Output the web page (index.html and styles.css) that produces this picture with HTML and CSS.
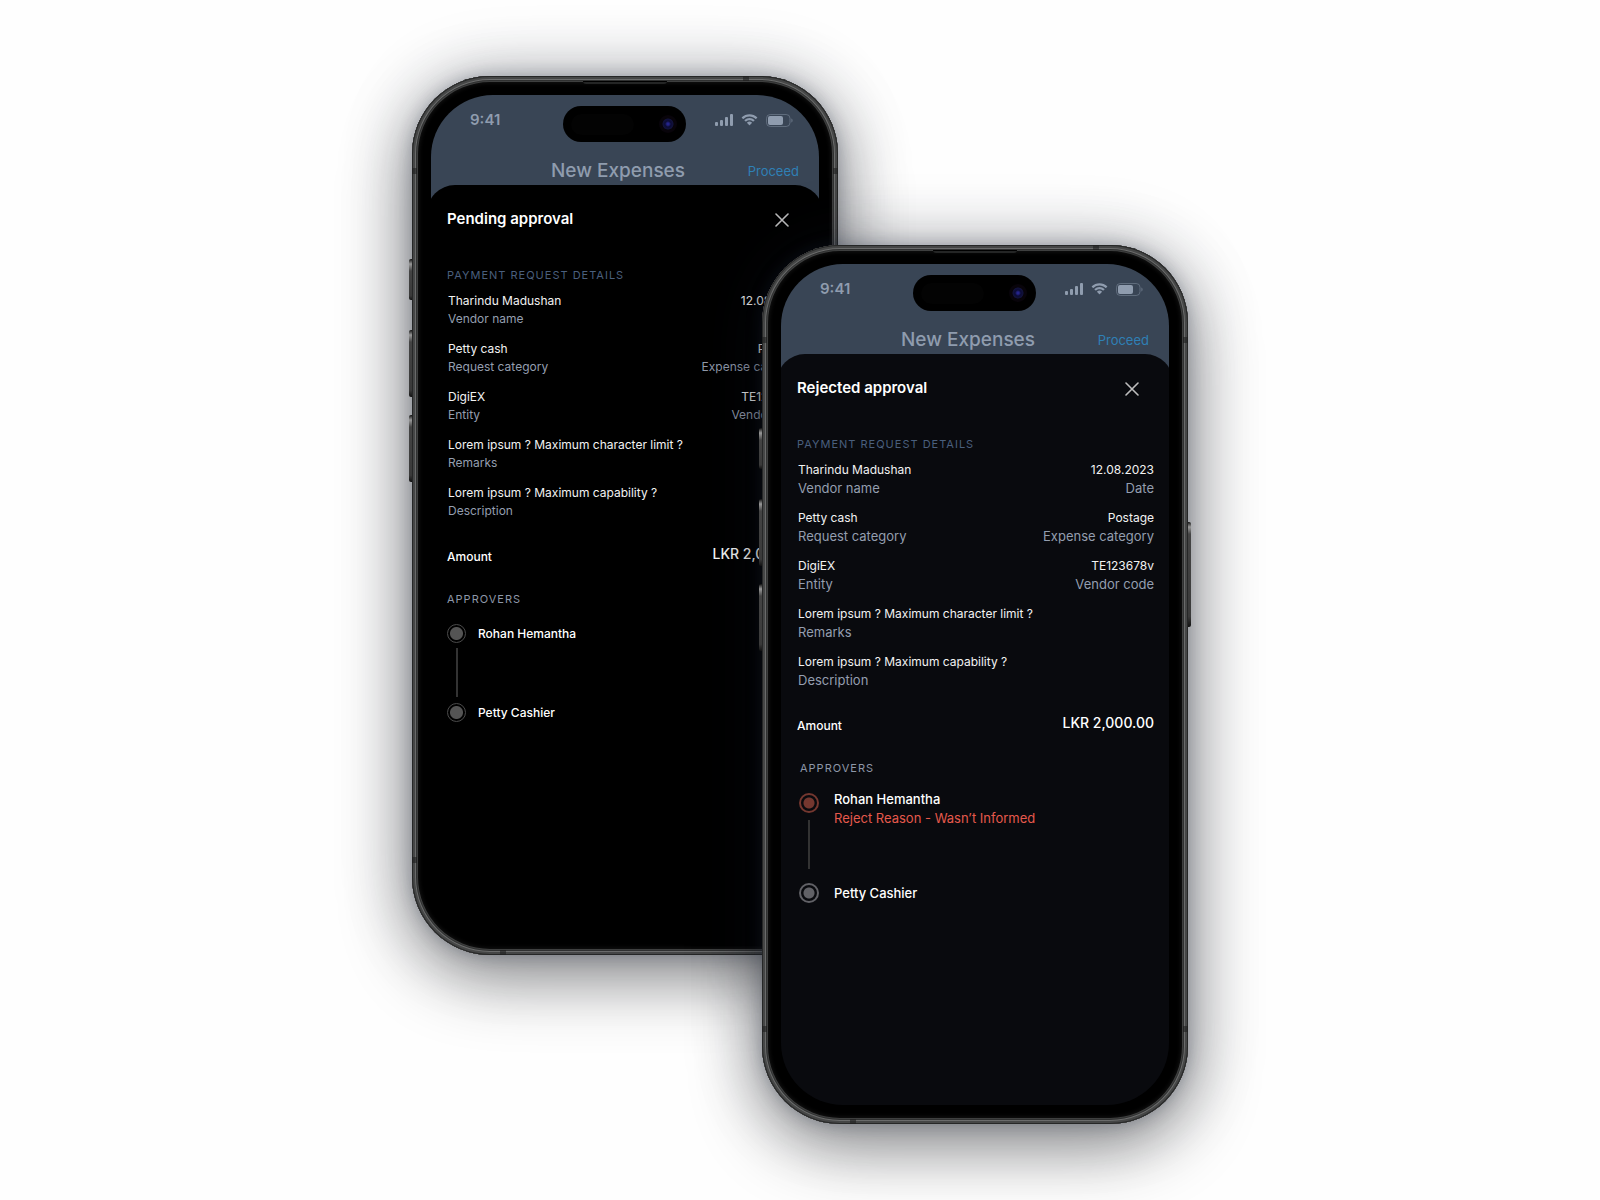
FILE: index.html
```html
<!DOCTYPE html>
<html lang="en">
<head>
<meta charset="utf-8">
<meta name="viewport" content="width=device-width, initial-scale=1">
<title>New Expenses</title>
<link rel="stylesheet" href="styles.css">
</head>
<body>
<svg width="0" height="0" class="sprite" aria-hidden="true">
  <symbol id="signal" viewBox="0 0 18 12">
    <rect x="0" y="8" width="3" height="4" rx="1"/><rect x="5" y="6" width="3" height="6" rx="1"/><rect x="10" y="3" width="3" height="9" rx="1"/><rect x="15" y="0" width="3" height="12" rx="1"/>
  </symbol>
  <symbol id="wifi" viewBox="0 0 17 12">
    <path d="M8.5 2.5c2.3 0 4.5.9 6.1 2.4.1.1.3.1.4 0l1.200-1.200c.1-.1.1-.3 0-.4A11 11 0 0 0 .8 3.300c-.1.1-.1.3 0 .4L2 4.900c.1.1.3.1.4 0A8.900 8.900 0 0 1 8.500 2.500z"/>
    <path d="M8.500 6.300c1.300 0 2.500.5 3.400 1.300.1.1.3.1.4 0l1.200-1.200c.1-.1.1-.3 0-.4a7.200 7.200 0 0 0-10 0c-.1.1-.1.3 0 .4l1.200 1.200c.1.1.3.1.4 0 .9-.8 2.100-1.300 3.400-1.300z"/>
    <path d="M10.900 9c.1-.1.1-.3 0-.4a3.700 3.700 0 0 0-4.800 0c-.1.1-.1.3 0 .4l2.200 2.200c.1.100.3.100.4 0z"/>
  </symbol>
  <symbol id="battery" viewBox="0 0 27 13">
    <rect x=".5" y=".5" width="23.500" height="12" rx="3.800" fill="none" stroke="currentColor" opacity=".45"/>
    <rect x="2" y="2" width="15" height="9" rx="2"/>
    <path d="M25.300 4.500v4c.8-.3 1.300-1.100 1.300-2s-.5-1.700-1.300-2z" opacity=".5"/>
  </symbol>
  <symbol id="close" viewBox="0 0 14 14">
    <path d="M1 1l12 12M13 1L1 13" fill="none" stroke="currentColor" stroke-width="1.600" stroke-linecap="round"/>
  </symbol>
</svg>

<main class="stage">
  <section class="phone phone-pending">
    <span class="key key-action"></span><span class="key key-up"></span><span class="key key-down"></span><span class="key key-power"></span>
    <span class="band band-left"></span><span class="band band-left band-low"></span><span class="band band-right"></span><span class="band band-right band-low"></span><span class="band band-top"></span><span class="band band-bottom"></span>
    <span class="speaker"></span>
    <div class="screen">
      <div class="status">
        <span class="time">9:41</span>
        <span class="island"><span class="sensor"></span><span class="lens"></span></span>
        <span class="icons"><svg width="18" height="12"><use href="#signal"/></svg><svg width="17" height="12"><use href="#wifi"/></svg><svg width="27" height="13"><use href="#battery"/></svg></span>
      </div>
      <header class="nav">
        <h1>New Expenses</h1>
        <button type="button" class="proceed">Proceed</button>
      </header>
      <div class="sheet">
        <div class="sheet-head">
          <h2>Pending approval</h2>
          <button type="button" class="close" aria-label="Close"><svg width="14" height="14"><use href="#close"/></svg></button>
        </div>
        <h3 class="overline details-title">PAYMENT REQUEST DETAILS</h3>
        <dl class="details">
          <div><dt>Vendor name</dt><dd>Tharindu Madushan</dd></div>
          <div><dt>Date</dt><dd>12.08.2023</dd></div>
          <div><dt>Request category</dt><dd>Petty cash</dd></div>
          <div><dt>Expense category</dt><dd>Postage</dd></div>
          <div><dt>Entity</dt><dd>DigiEX</dd></div>
          <div><dt>Vendor code</dt><dd>TE123678v</dd></div>
          <div class="wide"><dt>Remarks</dt><dd>Lorem ipsum ? Maximum character limit ?</dd></div>
          <div class="wide"><dt>Description</dt><dd>Lorem ipsum ? Maximum capability ?</dd></div>
        </dl>
        <div class="amount"><span>Amount</span><strong>LKR 2,000.00</strong></div>
        <h3 class="overline">APPROVERS</h3>
        <ol class="approvers">
          <li><span class="marker"><i class="dot"></i><i class="line"></i></span><div class="who">Rohan Hemantha</div></li>
          <li><span class="marker"><i class="dot"></i></span><div class="who">Petty Cashier</div></li>
        </ol>
      </div>
    </div>
  </section>

  <section class="phone phone-rejected">
    <span class="key key-action"></span><span class="key key-up"></span><span class="key key-down"></span><span class="key key-power"></span>
    <span class="band band-left"></span><span class="band band-left band-low"></span><span class="band band-right"></span><span class="band band-right band-low"></span><span class="band band-top"></span><span class="band band-bottom"></span>
    <span class="speaker"></span>
    <div class="screen">
      <div class="status">
        <span class="time">9:41</span>
        <span class="island"><span class="sensor"></span><span class="lens"></span></span>
        <span class="icons"><svg width="18" height="12"><use href="#signal"/></svg><svg width="17" height="12"><use href="#wifi"/></svg><svg width="27" height="13"><use href="#battery"/></svg></span>
      </div>
      <header class="nav">
        <h1>New Expenses</h1>
        <button type="button" class="proceed">Proceed</button>
      </header>
      <div class="sheet">
        <div class="sheet-head">
          <h2>Rejected approval</h2>
          <button type="button" class="close" aria-label="Close"><svg width="14" height="14"><use href="#close"/></svg></button>
        </div>
        <h3 class="overline details-title">PAYMENT REQUEST DETAILS</h3>
        <dl class="details">
          <div><dt>Vendor name</dt><dd>Tharindu Madushan</dd></div>
          <div><dt>Date</dt><dd>12.08.2023</dd></div>
          <div><dt>Request category</dt><dd>Petty cash</dd></div>
          <div><dt>Expense category</dt><dd>Postage</dd></div>
          <div><dt>Entity</dt><dd>DigiEX</dd></div>
          <div><dt>Vendor code</dt><dd>TE123678v</dd></div>
          <div class="wide"><dt>Remarks</dt><dd>Lorem ipsum ? Maximum character limit ?</dd></div>
          <div class="wide"><dt>Description</dt><dd>Lorem ipsum ? Maximum capability ?</dd></div>
        </dl>
        <div class="amount"><span>Amount</span><strong>LKR 2,000.00</strong></div>
        <div class="approval-log">
          <h3 class="overline">APPROVERS</h3>
          <ol class="approvers">
            <li class="rejected"><span class="marker"><i class="dot"></i><i class="line"></i></span><div class="who">Rohan Hemantha<p class="reason">Reject Reason - Wasn’t Informed</p></div></li>
            <li><span class="marker"><i class="dot"></i></span><div class="who">Petty Cashier</div></li>
          </ol>
        </div>
      </div>
    </div>
  </section>
</main>
</body>
</html>
```
FILE: styles.css
```css
* { box-sizing: border-box; }
body {
  margin: 0;
  background: #fefefe;
  color: #fff;
  font-family: Inter, "Liberation Sans", sans-serif;
  font-size: 12px;
  line-height: 18px;
}
h1, h2, h3, p, dl, dd, ol { margin: 0; padding: 0; font-weight: 400; }
ol { list-style: none; }
button { border: 0; padding: 0; background: none; font: inherit; color: inherit; cursor: pointer; }
svg { display: block; fill: currentColor; }
.sprite { position: absolute; }

.stage {
  display: flex;
  justify-content: center;
  align-items: flex-start;
  padding: 76px 24px;
}

/* Device frame */
.phone {
  position: relative;
  display: flex;
  flex: none;
  width: 426px;
  min-height: 879px;
  padding: 19px;
  border-radius: 78px;
  background: #000;
  box-shadow:
    inset 0 0 0 1px #262727,
    inset 0 0 0 3px #454646,
    inset 0 0 0 4px #6a6b6b,
    inset 0 0 0 5px #303131,
    inset 0 0 0 6px #3e3f3f,
    inset 0 0 4px 7px #141414,
    0 0 16px rgba(30, 42, 66, .26),
    0 0 70px rgba(30, 42, 66, .22),
    0 20px 70px rgba(0, 0, 0, .46);
}
.phone-rejected { margin: 169px 0 0 -76px; }
.key {
  position: absolute;
  left: -3px;
  width: 3px;
  border-radius: 2px 0 0 2px;
  background: linear-gradient(#111, #999 5px, #444 12px, #3a3a3a 90%, #111);
}
.key-action { top: 183px; height: 41px; }
.key-up { top: 254px; height: 67px; }
.key-down { top: 339px; height: 67px; }
.key-power { top: 277px; left: auto; right: -3px; height: 105px; border-radius: 0 2px 2px 0; }
.band { position: absolute; background: rgba(30, 30, 30, .6); }
.band-left { left: 0; top: 92px; width: 5px; height: 6px; }
.band-right { right: 0; top: 92px; width: 5px; height: 6px; }
.band-low { top: 781px; }
.band-top { top: 0; left: 331px; width: 6px; height: 5px; }
.band-bottom { bottom: 0; left: 88px; width: 6px; height: 5px; }
.speaker {
  position: absolute;
  top: 5px;
  left: 171px;
  width: 84px;
  height: 3px;
  border-radius: 0 0 3px 3px;
  background: #242525;
  border-top: 1px solid #000;
}
.screen {
  flex: 1;
  display: flex;
  flex-direction: column;
  overflow: hidden;
  border-radius: 62px;
  background: linear-gradient(#394555 140px, transparent 140px);
  color: #8f9cae;
}

/* Status bar */
.status {
  display: grid;
  grid-template-columns: 93px 123px 1fr;
  padding: 11px 26px 0 39px;
}
.time { font-size: 15px; line-height: 28px; font-weight: 600; }
.island {
  display: flex;
  align-items: center;
  justify-content: space-between;
  height: 36px;
  padding: 0 12px 0 8px;
  border-radius: 18px;
  background: #000;
}
.sensor { width: 63px; height: 21px; border-radius: 11px; background: #030303; }
.lens {
  width: 12px;
  height: 12px;
  border-radius: 50%;
  background: radial-gradient(circle, #24248c 0 1px, #0b0b34 3px, #12123c 5px, #08060f 6px);
  box-shadow: 0 0 0 3px #08040a;
}
.icons { display: flex; justify-content: flex-end; align-items: center; gap: 8px; height: 28px; }

/* Navigation bar behind the sheet */
.nav {
  display: grid;
  grid-template-columns: 1fr auto 1fr;
  align-items: center;
  height: 43px;
  padding: 14px 20px 0 6px;
}
.nav h1 { grid-column: 2; font-size: 19px; line-height: 24px; font-weight: 500; }
.proceed { justify-self: end; font-size: 13px; color: #2f80b5; }

/* Bottom sheet */
.sheet {
  flex: 1;
  margin: 0 -4px;
  padding: 22px 19px 24px 20px;
  border-radius: 28px 28px 0 0;
  background: #000;
  color: #fff;
}
.phone-rejected .sheet { background: #090a0e; }
.sheet-head { display: flex; justify-content: space-between; align-items: center; padding-right: 15px; }
.sheet-head h2 { font-size: 15px; line-height: 24px; font-weight: 600; }
.close { color: #bdbdbd; padding-top: 2px; }
.overline { font-size: 11px; line-height: 18px; letter-spacing: 1px; color: #8d97a8; }
.details-title { margin-top: 35px; color: #4a5f7d; }
.details {
  display: grid;
  grid-template-columns: auto auto;
  justify-content: space-between;
  row-gap: 12px;
  padding: 8px 0 22px 1px;
}
.details div { display: flex; flex-direction: column-reverse; }
.details div:nth-child(-n+6):nth-child(even) { text-align: right; }
.details .wide { grid-column: 1 / -1; }
.details dt { color: #949eaf; }
.phone-rejected .details dt { font-size: 13px; }
.details dd { color: #f2f2f2; }
.amount { display: flex; justify-content: space-between; align-items: flex-end; padding-bottom: 24px; font-weight: 500; }
.amount strong { font-size: 14px; line-height: 24px; font-weight: 500; }

/* Approval timeline */
.approvers { padding-top: 13px; line-height: 20px; font-weight: 500; }
.approvers li { display: flex; gap: 12px; }
.marker { display: flex; flex-direction: column; align-items: center; padding-top: 3px; }
.dot {
  width: 19px;
  height: 19px;
  border: 1px solid #4b4b4b;
  border-radius: 50%;
  background: radial-gradient(circle, #545454 6px, transparent 7px);
}
.line { width: 2px; height: 49px; margin: 5px 0 3px; background: #333; }
.who { padding-top: 3px; }
.approval-log { padding-left: 2px; }
.approval-log .overline { padding-left: 1px; }
.approval-log .approvers { font-size: 13px; }
.approval-log li { gap: 15px; }
.approval-log .dot {
  width: 20px;
  height: 20px;
  border: 2px solid #616166;
  background: radial-gradient(circle, #616166 5px, transparent 6px);
}
.approval-log .line { margin: 7px 0 11px; }
.approval-log .rejected .who { padding-top: 0; line-height: 19px; }
.approval-log .rejected .dot { border-color: #74372f; background: radial-gradient(circle, #74372f 5px, transparent 6px); }
.reason { color: #e5594c; font-weight: 400; }
```
